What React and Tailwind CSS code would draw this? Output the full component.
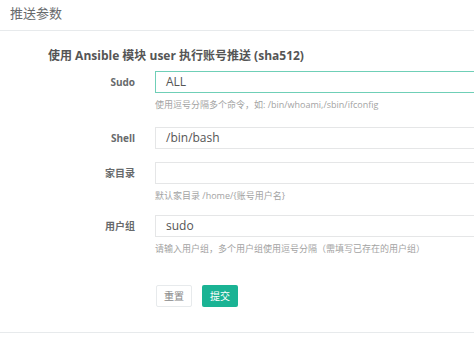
import React from 'react';

const font = { fontFamily: '"Open Sans", "Noto Sans CJK SC", sans-serif' };

function Row({ label, value, help, focus }) {
  return (
    <div className="flex items-start">
      <label className="w-[135px] shrink-0 text-right text-[10px] font-bold leading-[22px] text-[#676a6c]">
        {label}
      </label>
      <div className="ml-[20px] w-[340px] shrink-0">
        <div
          className={`h-[22px] border bg-white px-[10px] text-[12px] leading-[20px] text-[#555] ${
            focus ? 'border-[#6fcfb7]' : 'border-[#e5e6e7]'
          }`}
        >
          {value}
        </div>
        {help && <div className="mt-[6px] text-[9px] leading-[12px] text-[#a3a3a3]">{help}</div>}
      </div>
    </div>
  );
}

export default function App() {
  return (
    <div className="h-[346px] w-[474px] overflow-hidden bg-white" style={font}>
      {/* Title bar */}
      <div className="flex h-[31px] items-center border-b border-[#e7eaec] px-[10px] pb-[2px]">
        <span className="text-[13px] text-[#676a6c]">推送参数</span>
      </div>

      <div className="pl-[48px] pt-[17px]">
        <h3 className="text-[12px] font-bold leading-[16px] text-[#555]">
          使用 Ansible 模块 user 执行账号推送 (sha512)
        </h3>
      </div>

      <div className="mt-[7px] flex flex-col">
        <Row label="Sudo" value="ALL" focus help="使用逗号分隔多个命令，如: /bin/whoami,/sbin/ifconfig" />
        <div className="h-[16px]" />
        <Row label="Shell" value="/bin/bash" />
        <div className="h-[13px]" />
        <Row label="家目录" value="" help="默认家目录 /home/{账号用户名}" />
        <div className="h-[13px]" />
        <Row label="用户组" value="sudo" help="请输入用户组，多个用户组使用逗号分隔（需填写已存在的用户组）" />
      </div>

      <div className="mt-[30px] flex pl-[156px]">
        <button className="h-[22px] w-[36px] rounded-[2px] border border-[#e7eaec] bg-white text-[10px] text-[#888]">
          重置
        </button>
        <button className="ml-[10px] h-[22px] w-[36px] rounded-[2px] bg-[#1ab394] text-[10px] text-white">
          提交
        </button>
      </div>

      <div className="mt-[25px] border-t border-[#e7eaec]" />
    </div>
  );
}
